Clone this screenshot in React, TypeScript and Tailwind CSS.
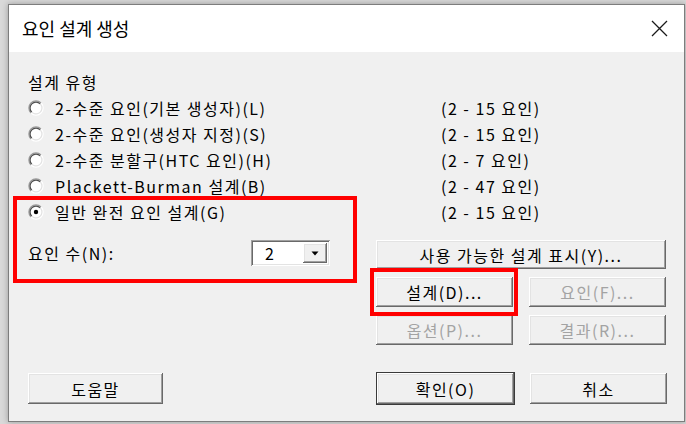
import React from "react";

const bevel =
  "shadow-[inset_-1px_-1px_0_#696969,inset_1px_1px_0_#ffffff,inset_-2px_-2px_0_#a0a0a0,inset_2px_2px_0_#e3e3e3]";

function Radio({ checked = false }: { checked?: boolean }) {
  return (
    <svg width="16" height="16" viewBox="0 0 16 16" className="shrink-0 block">
      <circle cx="8" cy="8" r="6.5" fill="#ffffff" />
      <path d="M3 13A7 7 0 0 1 13 3" stroke="#9a9a9a" strokeWidth="1.3" fill="none" />
      <path d="M13 3A7 7 0 0 1 3 13" stroke="#ffffff" strokeWidth="1.3" fill="none" />
      <path d="M3.8 12.2A5.9 5.9 0 0 1 12.2 3.8" stroke="#505050" strokeWidth="1.2" fill="none" />
      <path d="M12.2 3.8A5.9 5.9 0 0 1 3.8 12.2" stroke="#e3e3e3" strokeWidth="1.2" fill="none" />
      {checked && <circle cx="8" cy="8" r="2.2" fill="#000000" />}
    </svg>
  );
}

function Btn({
  label,
  disabled = false,
  isDefault = false,
  className = "",
}: {
  label: string;
  disabled?: boolean;
  isDefault?: boolean;
  className?: string;
}) {
  return (
    <div
      className={`flex items-center justify-center bg-[#f0f0f0] ${bevel} ${
        isDefault ? "outline outline-1 outline-[#3a3a3a]" : ""
      } ${disabled ? "text-[#a3a3a3]" : "text-black"} ${className}`}
    >
      {label}
    </div>
  );
}

const rows = [
  { text: "2-수준 요인(기본 생성자)(L)", range: "(2 - 15 요인)" },
  { text: "2-수준 요인(생성자 지정)(S)", range: "(2 - 15 요인)" },
  { text: "2-수준 분할구(HTC 요인)(H)", range: "(2 - 7 요인)" },
  { text: "Plackett-Burman 설계(B)", range: "(2 - 47 요인)" },
  { text: "일반 완전 요인 설계(G)", range: "(2 - 15 요인)", checked: true },
];

export default function App() {
  return (
    <div className="relative w-[686px] h-[424px] overflow-hidden bg-[#d9d9d9] pl-[8px] pt-[4px] font-['Noto_Sans_CJK_KR','Noto_Sans',sans-serif]">
      <div className="w-[677px] h-[418px] border border-[#7d7d7d] bg-[#f0f0f0] shadow-[0_0_6px_rgba(0,0,0,0.3)]">
        {/* Title bar */}
        <div className="h-[47px] bg-white flex items-center justify-between pl-[13px] pr-[16px]">
          <span className="text-[18px] text-black">요인 설계 생성</span>
          <svg width="17" height="17" viewBox="0 0 17 17">
            <path d="M1 1L16 16M16 1L1 16" stroke="#1a1a1a" strokeWidth="1.3" />
          </svg>
        </div>

        {/* Body */}
        <div className="pl-[19px] pr-[17px] pt-[17px] text-[16px] tracking-[1.5px] text-black">
          <div className="h-[26px] flex items-center">설계 유형</div>
          <div className="grid grid-cols-[413px_1fr]">
            {rows.map((r) => (
              <React.Fragment key={r.text}>
                <div className="h-[26px] flex items-center gap-[11px]">
                  <Radio checked={r.checked} />
                  <span>{r.text}</span>
                </div>
                <div className="h-[26px] flex items-center">{r.range}</div>
              </React.Fragment>
            ))}
          </div>

          <div className="flex mt-[15px]">
            <div className="w-[348px]">
              <div className="h-[26px] flex items-center">
                <span className="w-[223px]">요인 수(N):</span>
                <div className="w-[79px] h-[26px] bg-white flex items-center justify-between pl-[14px] pr-[3px] shadow-[inset_1px_1px_0_#a0a0a0,inset_-1px_-1px_0_#ffffff,inset_2px_2px_0_#696969,inset_-2px_-2px_0_#e3e3e3]">
                  <span>2</span>
                  <div className={`w-[24px] h-[20px] bg-[#f0f0f0] flex items-center justify-center ${bevel}`}>
                    <svg width="8" height="5" viewBox="0 0 8 5">
                      <path d="M0.5 0.5H7.5L4 4.5Z" fill="#000000" />
                    </svg>
                  </div>
                </div>
              </div>
            </div>
            <div className="w-[290px] grid grid-cols-2 gap-x-[16px] gap-y-[8px]">
              <Btn label="사용 가능한 설계 표시(Y)..." className="col-span-2 h-[29px]" />
              <Btn label="설계(D)..." className="h-[30px]" />
              <Btn label="요인(F)..." disabled className="h-[30px]" />
              <Btn label="옵션(P)..." disabled className="h-[30px]" />
              <Btn label="결과(R)..." disabled className="h-[30px]" />
            </div>
          </div>

          <div className="flex mt-[28px]">
            <Btn label="도움말" className="w-[135px] h-[31px]" />
            <div className="ml-auto flex gap-[16px]">
              <Btn label="확인(O)" isDefault className="w-[137px] h-[31px]" />
              <Btn label="취소" className="w-[137px] h-[31px]" />
            </div>
          </div>
        </div>
      </div>

      {/* Red annotation boxes */}
      <div className="absolute left-[13px] top-[196px] w-[344px] h-[87px] border-4 border-[#ff0000]" />
      <div className="absolute left-[370px] top-[268px] w-[148px] h-[48px] border-4 border-[#ff0000]" />
    </div>
  );
}
